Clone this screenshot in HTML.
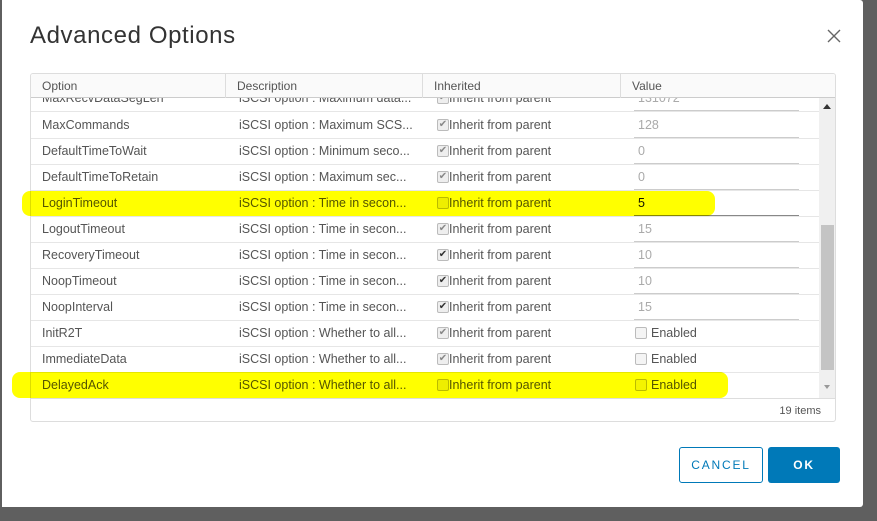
<!DOCTYPE html>
<html><head><style>
*{margin:0;padding:0;box-sizing:border-box}
body{width:877px;height:521px;background:#5f5f5f;font-family:"Liberation Sans",sans-serif;position:relative;overflow:hidden}
.dlg{position:absolute;left:2px;top:0;width:861px;height:507px;background:#fff;border-radius:0 3px 3px 0}
.t{position:absolute;left:28px;top:22px;font-size:24px;color:#333;letter-spacing:0.6px}
.x{position:absolute;left:825px;top:29px}
.grid{position:absolute;left:30px;top:73px;width:806px;height:349px;border:1px solid #ddd;border-radius:3px;overflow:hidden}
.hd{position:absolute;left:0;top:0;width:806px;height:24px;background:#fafafa;border-bottom:1px solid #ccc;font-size:12px;color:#555}
.hd div{position:absolute;top:0;height:24px;line-height:24px;padding-left:11px;border-right:1px solid #ddd}
.row{position:absolute;left:0;width:788px;height:26px;border-bottom:1px solid #e6e6e6;font-size:12.5px;color:#555}
.row span{position:absolute;top:0;line-height:25px;white-space:nowrap}
.cb{position:absolute;top:6px;width:12px;height:12px;border:1px solid #bbb;border-radius:2px;background:#eee;font-size:10px;line-height:10px;text-align:center;color:#888}
.cb.d{color:#333}
.u{position:absolute;left:603px;width:165px;top:24px;height:1px;background:#ccc}
.hl{position:absolute;background:#ffff00;mix-blend-mode:multiply}
.sb{position:absolute;left:788px;top:24px;width:17px;height:300px;background:#f0f0f0}
.th{position:absolute;left:2px;top:127px;width:13px;height:145px;background:#c4c4c4}
.ft{position:absolute;left:0;top:324px;width:806px;height:24px;border-top:1px solid #ddd;font-size:11px;color:#555;text-align:right;padding-right:16px;line-height:24px}
.btn{position:absolute;top:447px;height:36px;border-radius:3px;font-size:12px;letter-spacing:1.8px;text-align:center;line-height:34px}
</style></head><body>
<div class="dlg">
<div class="t">Advanced Options</div>
<svg class="x" width="14" height="14" viewBox="0 0 14 14"><path d="M1 1L13 13M13 1L1 13" stroke="#666" stroke-width="1.4"/></svg>
</div>
<div class="grid">
<div class="hd"><div style="left:0;width:195px">Option</div><div style="left:195px;width:197px">Description</div><div style="left:392px;width:198px">Inherited</div><div style="left:590px;width:216px;border:none">Value</div></div>
<div id="rows"></div>
<div class="sb"><div style="position:absolute;left:4px;top:6px;border:4px solid transparent;border-bottom:5px solid #333;border-top:0"></div><div class="th"></div><div style="position:absolute;left:5px;top:287px;border:3px solid transparent;border-top:4px solid #999;border-bottom:0"></div></div>
<div class="ft">19 items</div>
</div>
<div class="hl" style="left:22px;top:191px;width:693px;height:25px;border-radius:8px"></div>
<div class="hl" style="left:12px;top:372px;width:716px;height:26px;border-radius:8px"></div>
<div class="btn" style="left:679px;width:84px;border:1px solid #0079b8;color:#0079b8;background:#fff">CANCEL</div>
<div class="btn" style="left:768px;width:72px;background:#0079b8;color:#fff;line-height:36px;font-weight:bold">OK</div>
<script>
var d=[["MaxRecvDataSegLen","Maximum data...","l","131072"],["MaxCommands","Maximum SCS...","l","128"],["DefaultTimeToWait","Minimum seco...","l","0"],["DefaultTimeToRetain","Maximum sec...","l","0"],["LoginTimeout","Time in secon...","n","5"],["LogoutTimeout","Time in secon...","l","15"],["RecoveryTimeout","Time in secon...","d","10"],["NoopTimeout","Time in secon...","d","10"],["NoopInterval","Time in secon...","d","15"],["InitR2T","Whether to all...","l","E"],["ImmediateData","Whether to all...","l","E"],["DelayedAck","Whether to all...","n","E"]];
var h="";d.forEach(function(r,i){var top=i==0?12:39+(i-1)*26;
var c=r[2]=="n"?"":"&#10004;";
h+='<div class="row" style="top:'+(top-13)+'px"><span style="left:11px">'+r[0]+'</span><span style="left:208px">iSCSI option : '+r[1]+'</span><div class="cb'+(r[2]=="d"?" d":"")+'" style="left:406px">'+c+'</div><span style="left:418px">Inherit from parent</span>';
if(r[3]=="E")h+='<div class="cb" style="left:604px;background:#f4f4f4"></div><span style="left:620px">Enabled</span>';
else h+='<span style="left:607px;color:'+(r[2]=="n"?"#111":"#aaa")+'">'+r[3]+'</span><div class="u"'+(r[2]=="n"?' style="background:#888"':'')+'></div>';
h+='</div>';});
document.getElementById("rows").innerHTML='<div style="position:absolute;left:0;top:24px;width:806px;height:300px;overflow:hidden"><div style="position:absolute;top:-11px;left:0">'+h+'</div></div>';
</script>
</body></html>
